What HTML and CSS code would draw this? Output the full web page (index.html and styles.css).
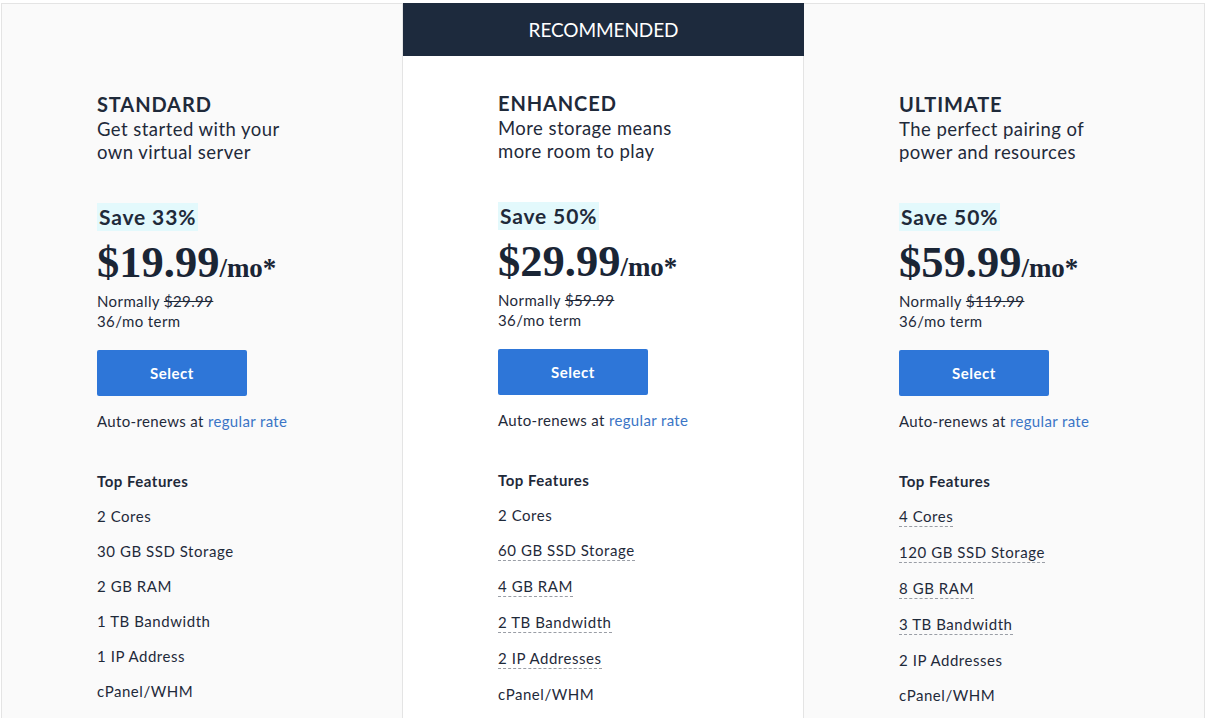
FILE: index.html
```html
<!DOCTYPE html>
<html>
<head>
<meta charset="utf-8">
<link rel="stylesheet" href="styles.css">
</head>
<body>
<div class="plans">
  <div class="plan plan-first">
    <div class="plan-body">
      <h2 class="plan-name">STANDARD</h2>
      <p class="plan-desc">Get started with your<br>own virtual server</p>
      <span class="save">Save 33%</span>
      <div class="price">$19.99<span class="per">/mo*</span></div>
      <p class="normal">Normally <s>$29.99</s></p>
      <p class="term">36/mo term</p>
      <a class="btn">Select</a>
      <p class="renew">Auto-renews at <a class="link">regular rate</a></p>
      <h3 class="feat-title">Top Features</h3>
      <ul class="features">
        <li><span>2 Cores</span></li>
        <li><span>30 GB SSD Storage</span></li>
        <li><span>2 GB RAM</span></li>
        <li><span>1 TB Bandwidth</span></li>
        <li><span>1 IP Address</span></li>
        <li><span>cPanel/WHM</span></li>
      </ul>
    </div>
  </div>
  <div class="plan plan-rec">
    <div class="rec-head">RECOMMENDED</div>
    <div class="plan-body">
      <h2 class="plan-name">ENHANCED</h2>
      <p class="plan-desc">More storage means<br>more room to play</p>
      <span class="save">Save 50%</span>
      <div class="price">$29.99<span class="per">/mo*</span></div>
      <p class="normal">Normally <s>$59.99</s></p>
      <p class="term">36/mo term</p>
      <a class="btn">Select</a>
      <p class="renew">Auto-renews at <a class="link">regular rate</a></p>
      <h3 class="feat-title">Top Features</h3>
      <ul class="features">
        <li><span>2 Cores</span></li>
        <li><span class="dash">60 GB SSD Storage</span></li>
        <li><span class="dash">4 GB RAM</span></li>
        <li><span class="dash">2 TB Bandwidth</span></li>
        <li><span class="dash">2 IP Addresses</span></li>
        <li><span>cPanel/WHM</span></li>
      </ul>
    </div>
  </div>
  <div class="plan">
    <div class="plan-body">
      <h2 class="plan-name">ULTIMATE</h2>
      <p class="plan-desc">The perfect pairing of<br>power and resources</p>
      <span class="save">Save 50%</span>
      <div class="price">$59.99<span class="per">/mo*</span></div>
      <p class="normal">Normally <s>$119.99</s></p>
      <p class="term">36/mo term</p>
      <a class="btn">Select</a>
      <p class="renew">Auto-renews at <a class="link">regular rate</a></p>
      <h3 class="feat-title">Top Features</h3>
      <ul class="features">
        <li><span class="dash">4 Cores</span></li>
        <li><span class="dash">120 GB SSD Storage</span></li>
        <li><span class="dash">8 GB RAM</span></li>
        <li><span class="dash">3 TB Bandwidth</span></li>
        <li><span>2 IP Addresses</span></li>
        <li><span>cPanel/WHM</span></li>
      </ul>
    </div>
  </div>
</div>
</body>
</html>
```
FILE: styles.css
```css
* { box-sizing: border-box; }
html, body { margin: 0; padding: 0; }
body {
  background: #ffffff;
  font-family: "Lato", "Open Sans", sans-serif;
  color: #1f2a3a;
  overflow: hidden;
  height: 718px;
}
.plans {
  display: flex;
  padding: 3px 0 0 1px;
}
.plan {
  width: 401px;
  flex: none;
  background: #fafafa;
  border: 1px solid #e4e4e4;
  border-left: none;
  height: 760px;
}
.plan-first {
  width: 402px;
  border-left: 1px solid #e4e4e4;
}
.plan-rec {
  background: #ffffff;
  border-top: none;
}
.rec-head {
  height: 53px;
  margin-right: -1px;
  background: #1d2a3d;
  color: #ffffff;
  font-size: 19px;
  display: flex;
  align-items: center;
  justify-content: center;
  letter-spacing: -0.1px;
}
.plan-body {
  display: flex;
  flex-direction: column;
  align-items: flex-start;
  padding: 89px 0 0 95px;
}
.plan-rec .plan-body { padding-top: 36px; }
.plan-name {
  margin: 0;
  font-size: 20px;
  line-height: 22px;
  font-weight: 700;
  letter-spacing: 0.9px;
}
.plan-desc {
  margin: 3px 0 0;
  font-size: 18.5px;
  line-height: 23px;
  font-weight: 400;
  letter-spacing: 0.45px;
}
.save {
  margin-top: 39px;
  background: #e3f9fc;
  font-size: 21px;
  font-weight: 700;
  line-height: 28px;
  padding: 0 2px;
  letter-spacing: 0.85px;
}
.price {
  margin-top: 9px;
  font-family: "Liberation Serif", "Times New Roman", serif;
  font-weight: 700;
  font-size: 44.5px;
  line-height: 44px;
  color: #1a2535;
}
.per { font-size: 27px; line-height: 0; }
.normal, .term {
  margin: 0;
  font-size: 15px;
  line-height: 20px;
  letter-spacing: 0.4px;
}
.normal { margin-top: 7px; }
.btn {
  margin-top: 19px;
  width: 150px;
  height: 46px;
  background: #2e76d8;
  color: #ffffff;
  border-radius: 2px;
  font-size: 15px;
  font-weight: 700;
  letter-spacing: 0.5px;
  display: flex;
  align-items: center;
  justify-content: center;
}
.renew {
  margin: 15px 0 0;
  font-size: 15px;
  line-height: 20px;
  letter-spacing: 0.35px;
}
.link { color: #3b75c6; }
.feat-title {
  margin: 40px 0 0;
  font-size: 15px;
  line-height: 20px;
  font-weight: 700;
  letter-spacing: 0.5px;
}
.features {
  list-style: none;
  margin: 0;
  padding: 0;
}
.features li {
  margin-top: 15px;
  font-size: 15px;
  line-height: 20px;
  letter-spacing: 0.55px;
}
.features .dash {
  display: inline-block;
  border-bottom: 1px dashed #9a9ea6;
}
```
